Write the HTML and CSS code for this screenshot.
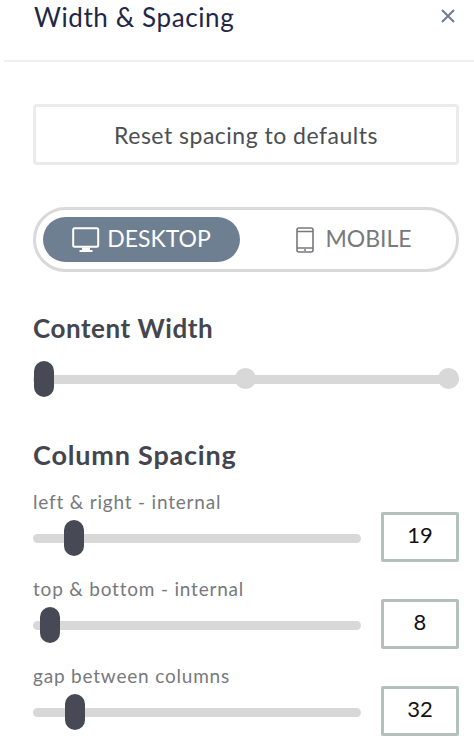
FILE: index.html
```html
<!DOCTYPE html>
<html lang="en">
<head>
    <meta charset="UTF-8">
    <title>Width &amp; Spacing</title>
    <link rel="stylesheet" href="styles.css">
</head>
<body>
    <div class="top-bar">
        <h1>Width &amp; Spacing</h1>
        <svg class="close" width="16" height="16" viewBox="0 0 16 16"><path d="M2 2 L14 14 M14 2 L2 14" stroke="#6f7c8c" stroke-width="2" fill="none"/></svg>
    </div>

    <div class="panel">
        <button class="reset-btn">Reset spacing to defaults</button>

        <div class="device-toggle">
            <div class="device active">
                <svg width="28" height="26" viewBox="0 0 28 26"><rect x="1.2" y="1.2" width="25" height="18.5" rx="1.5" fill="none" stroke="#fff" stroke-width="2"/><path d="M10 20.5h8v2.5h2.5v2h-13v-2H10z" fill="#fff"/></svg>
                <span>DESKTOP</span>
            </div>
            <div class="device">
                <svg width="18" height="26" viewBox="0 0 18 26"><rect x="1" y="1" width="16" height="24" rx="2" fill="none" stroke="#77797d" stroke-width="1.6"/><path d="M1 4.5h16M1 21h16" stroke="#77797d" stroke-width="1.6"/><circle cx="9" cy="23" r="1" fill="#77797d"/></svg>
                <span>MOBILE</span>
            </div>
        </div>

        <h2 class="width-title">Content Width</h2>
        <div class="slider steps">
            <div class="track"></div>
            <span class="stop stop-mid"></span>
            <span class="stop stop-end"></span>
            <span class="thumb" style="left: 1px"></span>
        </div>

        <h2 class="spacing-title">Column Spacing</h2>

        <div class="spacing-row">
            <div class="spacing-left">
                <label>left &amp; right - internal</label>
                <div class="slider">
                    <div class="track"></div>
                    <span class="thumb" style="left: 31px"></span>
                </div>
            </div>
            <div class="value">19</div>
        </div>

        <div class="spacing-row">
            <div class="spacing-left">
                <label>top &amp; bottom - internal</label>
                <div class="slider">
                    <div class="track"></div>
                    <span class="thumb" style="left: 7px"></span>
                </div>
            </div>
            <div class="value">8</div>
        </div>

        <div class="spacing-row">
            <div class="spacing-left">
                <label>gap between columns</label>
                <div class="slider">
                    <div class="track"></div>
                    <span class="thumb" style="left: 32px"></span>
                </div>
            </div>
            <div class="value">32</div>
        </div>
    </div>
</body>
</html>
```

FILE: styles.css
```css
/* Reset */
html, body {
    margin: 0;
    padding: 0;
    height: 756px;
    overflow: hidden;
    background: #fff;
    font-family: Lato, "Open Sans", sans-serif;
}

/* Top bar */
.top-bar {
    height: 60px;
    margin-left: 4px;
    padding: 0 18px 0 30px;
    display: flex;
    justify-content: space-between;
    border-bottom: 2px solid #eff0f1;
}

.top-bar h1 {
    margin: 0;
    font-size: 26px;
    font-weight: 400;
    line-height: 35px;
    color: #1f2747;
    letter-spacing: 0.6px;
}

.top-bar .close {
    margin-top: 8px;
}

/* Content */
.panel {
    padding: 42px 15px 0 33px;
}

.reset-btn {
    display: block;
    width: 100%;
    height: 61px;
    background: #fff;
    border: 3px solid #ebebeb;
    border-radius: 4px;
    font-family: inherit;
    font-size: 23px;
    color: #4b4e53;
    letter-spacing: 0.5px;
}

.device-toggle {
    margin-top: 42px;
    height: 65px;
    box-sizing: border-box;
    padding: 7px;
    border: 3px solid #d9d9d9;
    border-radius: 33px;
    display: flex;
}

.device {
    height: 45px;
    display: flex;
    align-items: center;
    justify-content: center;
    gap: 7px;
    font-size: 23px;
    color: #77797d;
}

.device span {
    margin-top: -4px;
}

.device.active {
    width: 197px;
    background: #6f7f92;
    border-radius: 23px;
    color: #fff;
}

.device:not(.active) {
    flex: 1;
    gap: 11px;
    padding-left: 19px;
}

h2 {
    margin: 0;
    font-size: 26px;
    font-weight: 700;
    line-height: 32px;
    color: #43464f;
    letter-spacing: 0.55px;
}

.width-title {
    margin-top: 40px;
}

.spacing-title {
    margin-top: 42px;
    font-size: 27px;
    letter-spacing: 0.8px;
}

/* Sliders */
.slider {
    position: relative;
    height: 36px;
}

.track {
    position: absolute;
    left: 0;
    right: 0;
    top: 14px;
    height: 9px;
    background: #d8d8d8;
    border-radius: 5px;
}

.thumb {
    position: absolute;
    top: 0;
    width: 20px;
    height: 36px;
    background: #474a55;
    border-radius: 10px;
}

.stop {
    position: absolute;
    top: 7px;
    width: 21px;
    height: 21px;
    background: #d8d8d8;
    border-radius: 50%;
}

.stop-mid {
    left: 202px;
}

.stop-end {
    right: 0;
}

.steps {
    margin-top: 17px;
}

/* Spacing rows */
.spacing-row {
    display: flex;
    justify-content: space-between;
    height: 87px;
}

.spacing-left {
    width: 328px;
}

.spacing-left label {
    display: block;
    height: 25px;
    margin-top: 18px;
    margin-bottom: 6px;
    font-size: 19px;
    line-height: 25px;
    color: #77797d;
    letter-spacing: 0.8px;
}

.value {
    width: 78px;
    height: 50px;
    margin-top: 41px;
    box-sizing: border-box;
    border: 3px solid #b3c0bc;
    border-radius: 2px;
    font-size: 22px;
    line-height: 40px;
    text-align: center;
    color: #111;
}
```
